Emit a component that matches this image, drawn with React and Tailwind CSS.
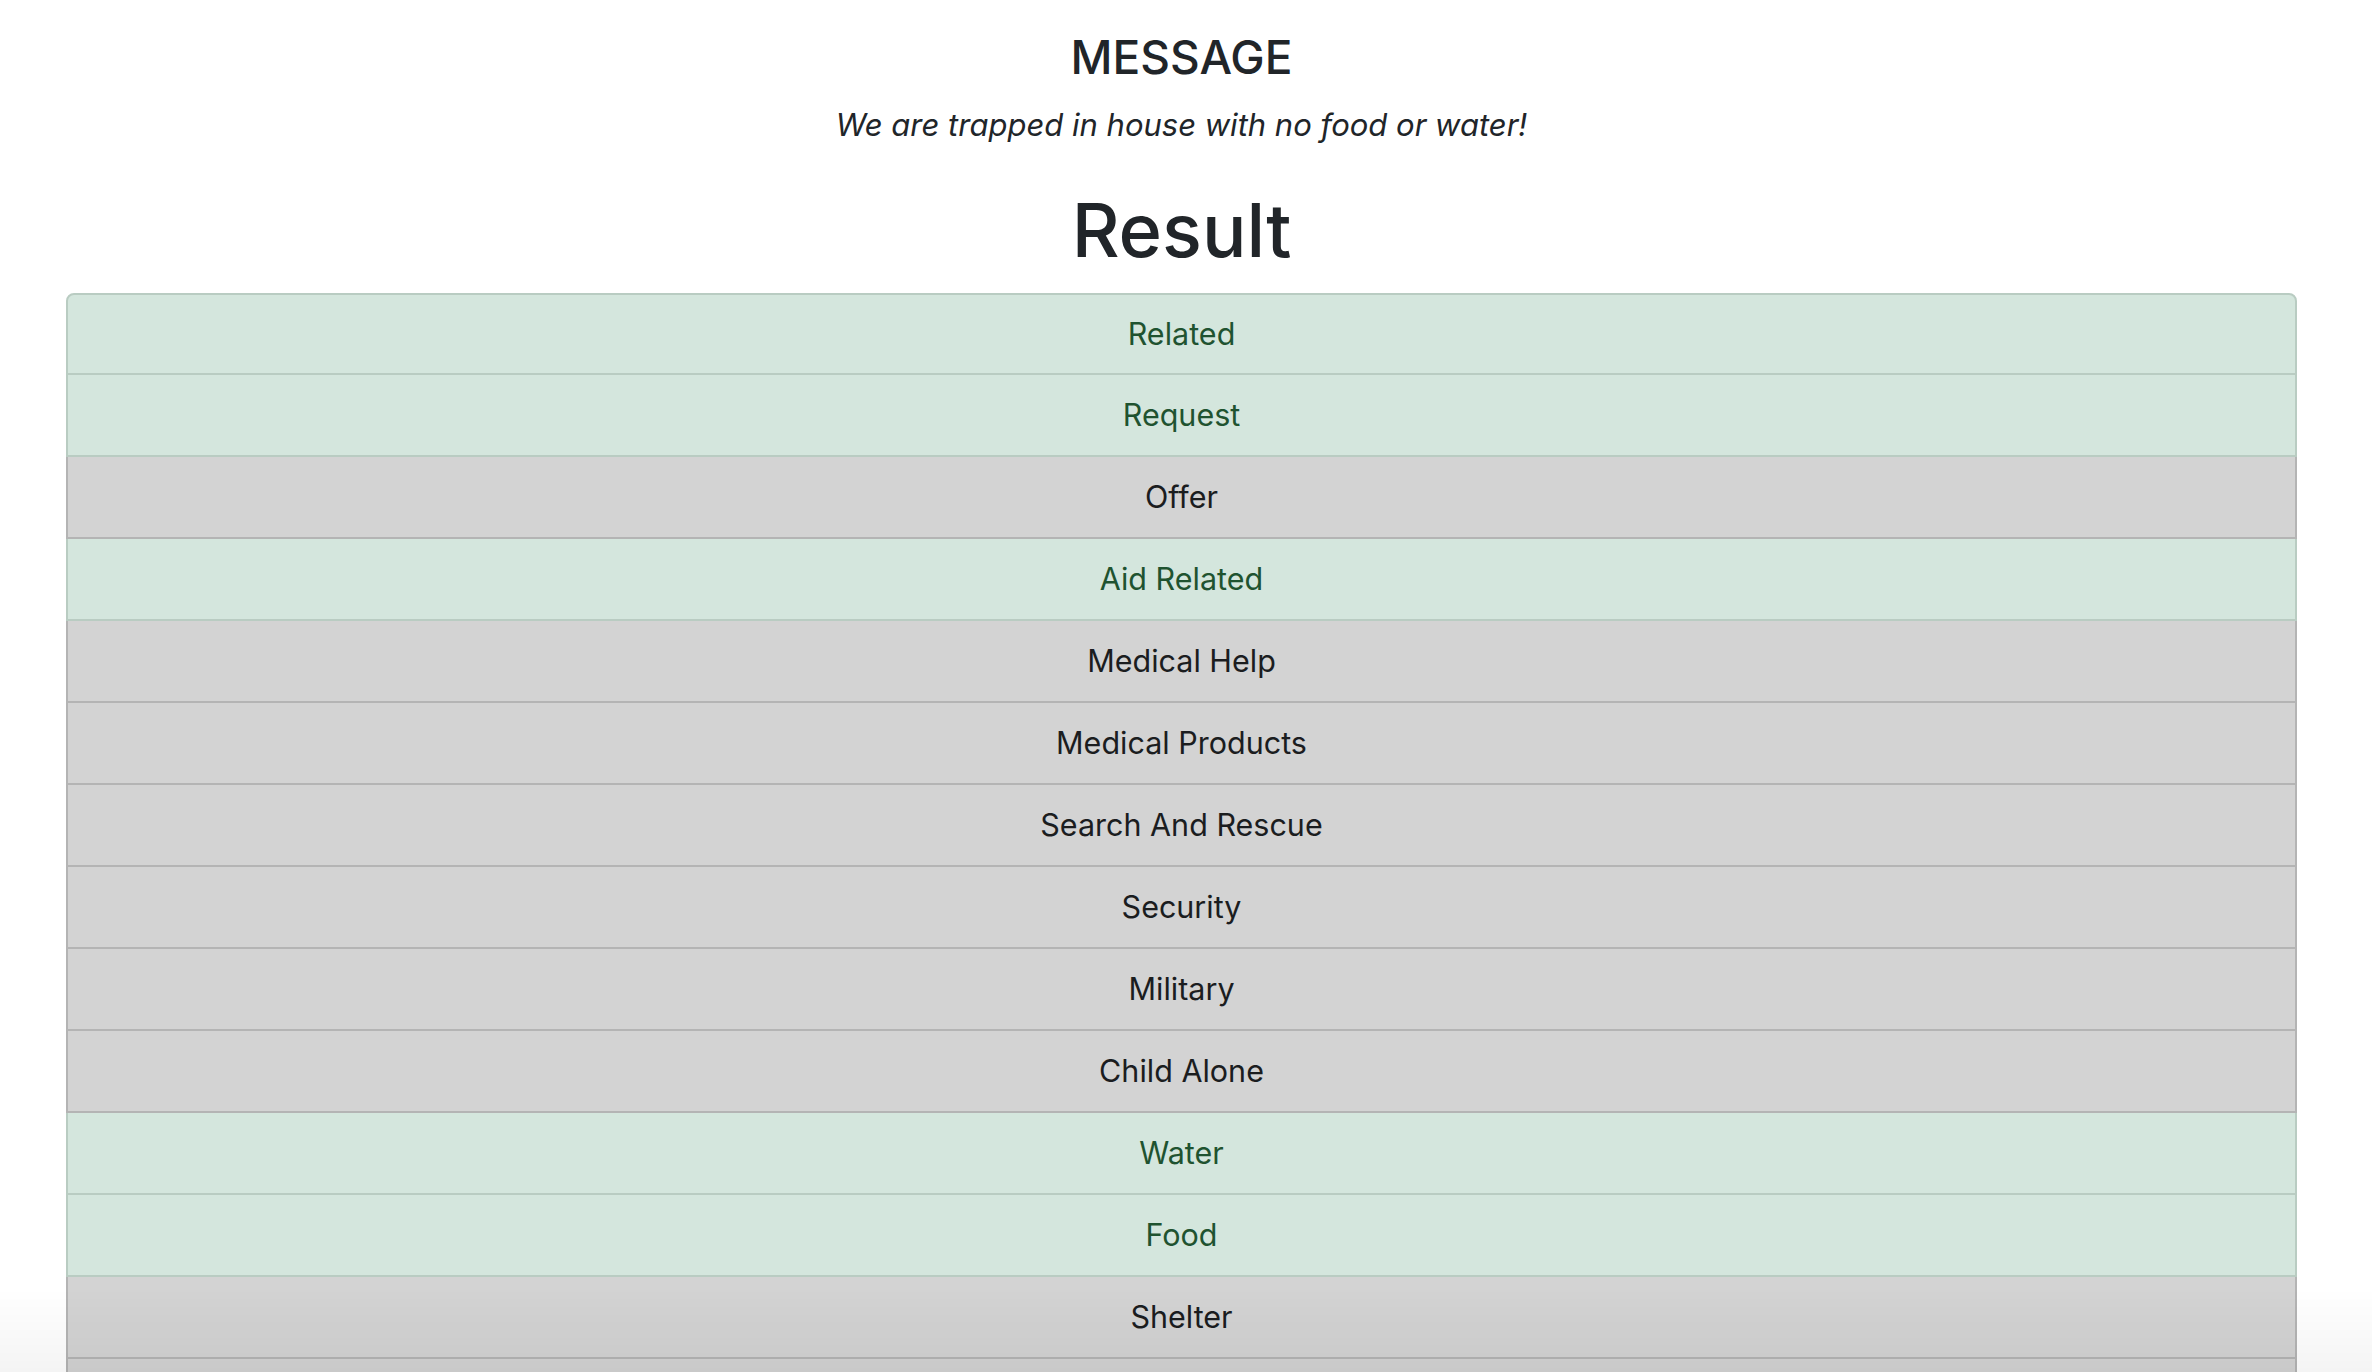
import React from 'react';

const categories = [
  { name: 'Related', hit: true },
  { name: 'Request', hit: true },
  { name: 'Offer', hit: false },
  { name: 'Aid Related', hit: true },
  { name: 'Medical Help', hit: false },
  { name: 'Medical Products', hit: false },
  { name: 'Search And Rescue', hit: false },
  { name: 'Security', hit: false },
  { name: 'Military', hit: false },
  { name: 'Child Alone', hit: false },
  { name: 'Water', hit: true },
  { name: 'Food', hit: true },
  { name: 'Shelter', hit: false },
  { name: 'Clothing', hit: false },
  { name: 'Money', hit: false },
  { name: 'Missing People', hit: false },
  { name: 'Refugees', hit: false },
  { name: 'Death', hit: false },
  { name: 'Other Aid', hit: false },
  { name: 'Infrastructure Related', hit: false },
];

const ResultRow = ({ name, hit, first }) => (
  <li
    className={`flex h-[82px] items-center justify-center border-x-2 border-b-2 text-[30.5px] ${
      first ? 'rounded-t-[8px] border-t-2' : ''
    } ${
      hit
        ? 'border-[#b9ccc2] bg-[#d4e6dd] text-[#1f5330]'
        : 'border-[#b4b4b4] bg-[#d3d3d3] text-[#1b1d1f]'
    }`}
  >
    {name}
  </li>
);

const App = () => {
  return (
    <div className="relative min-h-screen bg-white font-['Inter','Liberation_Sans',sans-serif] text-[#212529]">
      <div className="ml-[66px] w-[2231px]">
        <div className="flex flex-col items-center pt-[29px]">
          <h3 className="text-[46px] font-medium leading-[56px]">MESSAGE</h3>
          <p className="mt-[20px] text-[31px] italic leading-[40px]">
            We are trapped in house with no food or water!
          </p>
          <h1 className="mt-[39px] text-[74px] font-medium leading-[92px]">Result</h1>
        </div>

        <ul className="mt-[17px]">
          {categories.map((c, i) => (
            <ResultRow key={c.name} name={c.name} hit={c.hit} first={i === 0} />
          ))}
        </ul>
      </div>

      <div className="pointer-events-none fixed inset-x-0 bottom-0 h-[84px] bg-linear-to-b from-transparent to-[rgba(0,0,0,0.045)]"></div>
    </div>
  );
};

export default App;
